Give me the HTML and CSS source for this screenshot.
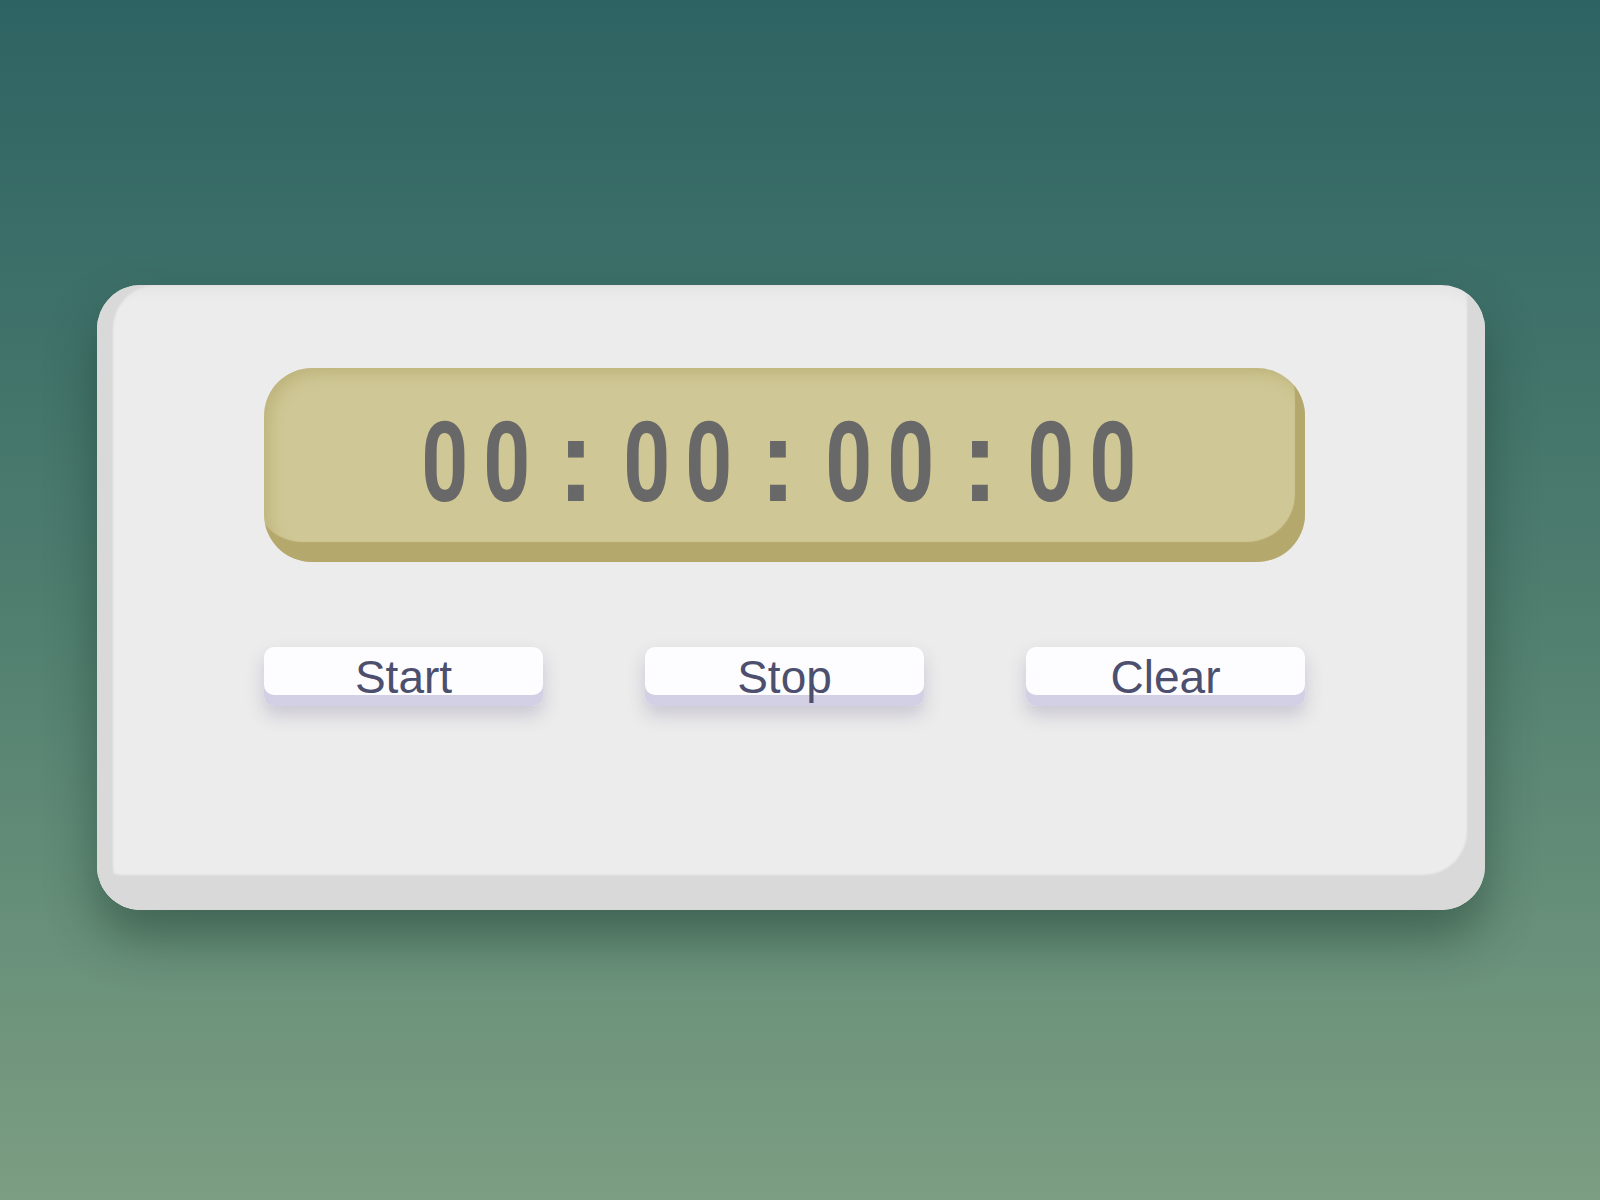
FILE: index.html
```html
<!DOCTYPE html>
<html lang="en">
    <head>
        <meta charset="UTF-8">
        <meta name="viewport" content="width=device-width, initial-scale=1.0">
        <title>Stopwatch</title>
        <link rel="stylesheet" href="styles.css">
    </head>
    <body>
        <div class="watch">
            <div class="screen">
                <div class="time" id="time">
                    <span class="num">0</span><span class="num">0</span><span class="sep">:</span><span class="num">0</span><span class="num">0</span><span class="sep">:</span><span class="num">0</span><span class="num">0</span><span class="sep">:</span><span class="num">0</span><span class="num">0</span>
                </div>
            </div>
            <div class="controls">
                <button type="button" onclick="start()">Start</button>
                <button type="button" onclick="stop()">Stop</button>
                <button type="button" onclick="clearTime()">Clear</button>
            </div>
        </div>
        <script type="text/javascript">
            var timer = null;
            var ticks = 0;
            function pad(n) {
                return (n < 10 ? '0' : '') + n;
            }
            function render() {
                var cs = ticks % 100;
                var s = Math.floor(ticks / 100) % 60;
                var m = Math.floor(ticks / 6000) % 60;
                var h = Math.floor(ticks / 360000) % 100;
                var str = pad(h) + pad(m) + pad(s) + pad(cs);
                var nums = document.querySelectorAll('#time .num');
                for (var i = 0; i < nums.length; i++) {
                    nums[i].textContent = str[i];
                }
            }
            function start() {
                if (timer) return;
                timer = setInterval(function () {
                    ticks++;
                    render();
                }, 10);
            }
            function stop() {
                clearInterval(timer);
                timer = null;
            }
            function clearTime() {
                stop();
                ticks = 0;
                render();
            }
        </script>
    </body>
</html>
```

FILE: styles.css
```css
* {
    margin: 0;
    padding: 0;
    box-sizing: border-box;
}

html, body {
    height: 100%;
}

body {
    background: linear-gradient(180deg, #2d6363 0%, #4f7e6f 50%, #7c9e82 100%);
    font-family: "Liberation Sans", Arial, sans-serif;
    padding: 285px 0 0 97px;
}

.watch {
    width: 1388px;
    height: 625px;
    padding: 83px 180px 0 167px;
    background: #ececec;
    border-radius: 44px;
    box-shadow:
        inset 16px 0 2px #d9d9d9,
        inset -18px -35px 2px #d9d9d9,
        inset 0 8px 12px rgba(0, 0, 0, 0.03),
        0 28px 50px rgba(20, 50, 40, 0.45);
}

.screen {
    height: 194px;
    background: #cfc795;
    border-radius: 48px;
    box-shadow:
        inset -10px -20px 1px #b5a86c,
        inset 6px 6px 14px rgba(160, 145, 80, 0.35);
}

.time {
    display: flex;
    justify-content: center;
    align-items: baseline;
    padding-right: 14px;
    color: #686868;
    font-size: 112px;
    line-height: 190px;
}

.num {
    width: 62px;
    text-align: center;
    font-family: Roboto, "Liberation Sans", sans-serif;
    font-weight: 700;
    transform: scaleX(0.73);
}

.sep {
    width: 78px;
    text-align: center;
    font-family: "Liberation Sans", Arial, sans-serif;
    font-weight: 700;
    font-size: 118px;
    line-height: 180px;
    transform: scaleX(0.95);
}

.controls {
    display: flex;
    justify-content: space-between;
    margin-top: 85px;
}

button {
    width: 279px;
    height: 59px;
    border: 0;
    border-radius: 10px;
    background: #fdfdff;
    color: #4d4f6e;
    font-family: "Liberation Sans", Arial, sans-serif;
    font-size: 46px;
    line-height: 58px;
    box-shadow:
        inset 0 -11px 0 #d3cfe4,
        0 9px 18px rgba(80, 70, 120, 0.22);
    cursor: pointer;
}
```
